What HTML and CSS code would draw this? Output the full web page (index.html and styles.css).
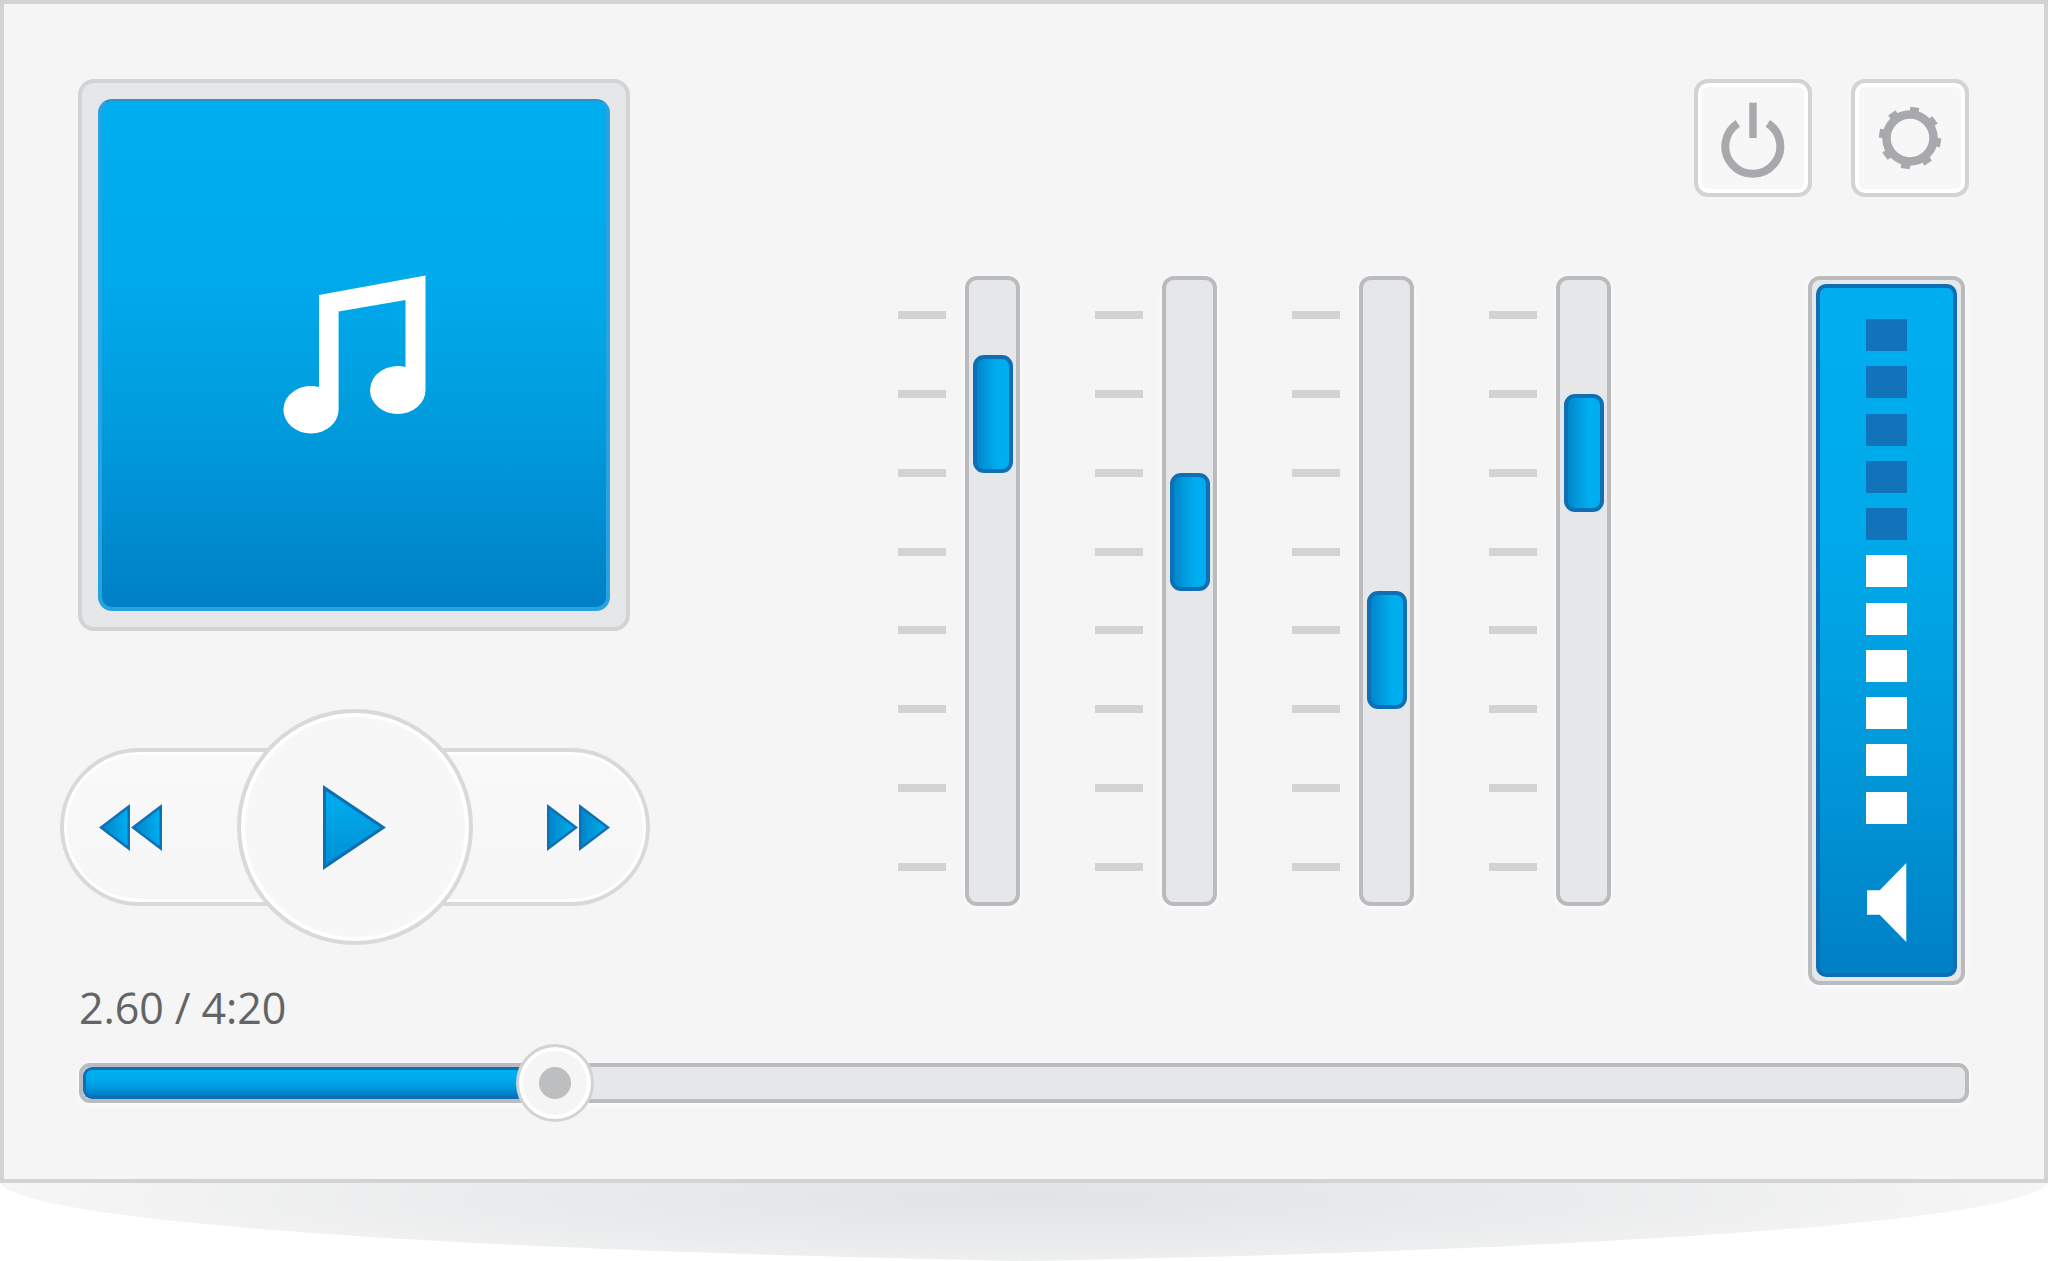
FILE: index.html
```html
<!DOCTYPE html>
<html lang="en">
<head>
  <meta charset="UTF-8">
  <title>Music Player</title>
  <link rel="stylesheet" href="styles.css">
</head>
<body>

  <div class="player">
    <svg class="defs" width="0" height="0">
      <defs>
        <linearGradient id="playFill" x1="0" y1="0" x2="0" y2="1">
          <stop offset="0" stop-color="#00aeef"/>
          <stop offset="1" stop-color="#0091d6"/>
        </linearGradient>
        <linearGradient id="skipFill" x1="0" y1="0" x2="1" y2="0">
          <stop offset="0" stop-color="#0085ca"/>
          <stop offset="1" stop-color="#00aeef"/>
        </linearGradient>
        <linearGradient id="rewindFill" x1="1" y1="0" x2="0" y2="0">
          <stop offset="0" stop-color="#00aeef"/>
          <stop offset="1" stop-color="#0085ca"/>
        </linearGradient>
      </defs>
    </svg>

    <div class="main">
      <!-- Album art and transport -->
      <div class="left">
        <div class="album-frame">
          <div class="album">
            <svg class="note" viewBox="283 275 143 159">
              <path fill="#fff" d="M319 295 L425.5 275.5 V390 A27.75 24 0 0 1 370 390 A27.75 24 0 0 1 405.5 367 V300 L338.6 311.4 V409.75 A27.6 23.75 0 0 1 283.4 409.75 A27.6 23.75 0 0 1 319 387 Z"/>
            </svg>
          </div>
        </div>

        <div class="transport">
          <div class="pill">
            <svg class="skip" viewBox="0 0 63 47">
              <polygon fill="#0f6fb5" points="31,0 0,23.5 31,47"/>
              <polygon fill="url(#rewindFill)" points="28.5,5 4,23.5 28.5,42"/>
              <polygon fill="#0f6fb5" points="63,0 32,23.5 63,47"/>
              <polygon fill="url(#rewindFill)" points="60.5,5 36,23.5 60.5,42"/>
            </svg>
            <svg class="skip" viewBox="0 0 63 47">
              <polygon fill="#0f6fb5" points="0,0 31,23.5 0,47"/>
              <polygon fill="url(#skipFill)" points="2.5,5 27,23.5 2.5,42"/>
              <polygon fill="#0f6fb5" points="32,0 63,23.5 32,47"/>
              <polygon fill="url(#skipFill)" points="34.5,5 59,23.5 34.5,42"/>
            </svg>
          </div>
          <div class="play">
            <svg class="play-icon" viewBox="0 0 63 85">
              <polygon fill="#0f6fb5" points="0,0 63,42.5 0,85"/>
              <polygon fill="url(#playFill)" points="3,6 57.5,42.5 3,79"/>
            </svg>
          </div>
        </div>

        <div class="time">2.60 / 4:20</div>
      </div>

      <div class="right">
        <!-- Power and settings -->
        <div class="top-buttons">
          <div class="square-btn">
            <svg class="btn-icon" viewBox="0 0 110 110">
              <rect x="51.3" y="19.7" width="7.4" height="35.3" fill="#a7a9ac"/>
              <path d="M39.8 40.3 A27.5 27.5 0 1 0 69.8 40.3" fill="none" stroke="#a7a9ac" stroke-width="8"/>
            </svg>
          </div>
          <div class="square-btn">
            <svg class="btn-icon" viewBox="0 0 110 110">
              <circle cx="55" cy="55" r="23.5" fill="none" stroke="#a7a9ac" stroke-width="8.5"/>
              <g fill="#a7a9ac">
                <rect x="50.5" y="24" width="9" height="8" transform="rotate(9 55 55)"/>
                <rect x="50.5" y="24" width="9" height="8" transform="rotate(54 55 55)"/>
                <rect x="50.5" y="24" width="9" height="8" transform="rotate(99 55 55)"/>
                <rect x="50.5" y="24" width="9" height="8" transform="rotate(144 55 55)"/>
                <rect x="50.5" y="24" width="9" height="8" transform="rotate(189 55 55)"/>
                <rect x="50.5" y="24" width="9" height="8" transform="rotate(234 55 55)"/>
                <rect x="50.5" y="24" width="9" height="8" transform="rotate(279 55 55)"/>
                <rect x="50.5" y="24" width="9" height="8" transform="rotate(324 55 55)"/>
              </g>
            </svg>
          </div>
        </div>

        <div class="mixer">
          <!-- Equalizer sliders -->
          <div class="slider">
            <div class="ticks">
              <span></span><span></span><span></span><span></span><span></span><span></span><span></span><span></span>
            </div>
            <div class="track"><div class="thumb eq-1"></div></div>
          </div>
          <div class="slider">
            <div class="ticks">
              <span></span><span></span><span></span><span></span><span></span><span></span><span></span><span></span>
            </div>
            <div class="track"><div class="thumb eq-2"></div></div>
          </div>
          <div class="slider">
            <div class="ticks">
              <span></span><span></span><span></span><span></span><span></span><span></span><span></span><span></span>
            </div>
            <div class="track"><div class="thumb eq-3"></div></div>
          </div>
          <div class="slider">
            <div class="ticks">
              <span></span><span></span><span></span><span></span><span></span><span></span><span></span><span></span>
            </div>
            <div class="track"><div class="thumb eq-4"></div></div>
          </div>

          <!-- Volume -->
          <div class="volume">
            <div class="volume-inner">
              <div class="levels">
                <span class="off"></span><span class="off"></span><span class="off"></span><span class="off"></span><span class="off"></span>
                <span></span><span></span><span></span><span></span><span></span><span></span>
              </div>
              <svg class="speaker" viewBox="0 0 40 79">
                <polygon fill="#fff" points="0,27.3 12.7,27.3 39.3,0 39.3,79 12.7,51.7 0,51.7"/>
              </svg>
            </div>
          </div>
        </div>
      </div>
    </div>

    <!-- Seek bar -->
    <div class="seek">
      <div class="seek-fill"></div>
      <div class="knob"><div class="knob-dot"></div></div>
    </div>
  </div>

  <div class="shadow"></div>

</body>
</html>
```

FILE: styles.css
```css
html, body {
  margin: 0;
  background-color: #fff;
}

body {
  width: 2048px;
  height: 1261px;
  overflow: hidden;
}

.player {
  box-sizing: border-box;
  width: 2048px;
  height: 1183px;
  padding: 75px 75px 0;
  background-color: #f5f5f5;
  border: 4px solid #d1d3d4;
}

.defs {
  position: absolute;
}

.main {
  display: flex;
}

/* left column */

.left {
  width: 552px;
  flex-shrink: 0;
  margin-left: -1px;
}

.album-frame {
  box-sizing: border-box;
  width: 552px;
  height: 552px;
  padding: 16px;
  background-color: #e6e7e8;
  border: 4px solid #d1d3d4;
  border-radius: 16px;
}

.album {
  box-sizing: border-box;
  display: flex;
  align-items: center;
  justify-content: center;
  height: 512px;
  border: 4px solid #29a3e0;
  border-top: 2px solid #2a93cc;
  border-radius: 14px;
  background: linear-gradient(#00aeef 0%, #00aaeb 35%, #009bdc 65%, #0080c6 100%);
}

.note {
  width: 143px;
  height: 159px;
}

.transport {
  position: relative;
  display: flex;
  align-items: center;
  width: 590px;
  height: 236px;
  margin: 78px 0 0 -18px;
}

.pill {
  box-sizing: border-box;
  display: flex;
  align-items: center;
  justify-content: space-between;
  width: 590px;
  height: 158px;
  padding: 0 36px 0 35px;
  background: linear-gradient(#f9f9f9, #f6f6f6);
  border: 4px solid #d8d9da;
  border-radius: 79px;
  box-shadow: inset 0 0 0 3px #fff;
}

.skip {
  width: 63px;
  height: 47px;
}

.play {
  position: absolute;
  top: 0;
  left: 177px;
  box-sizing: border-box;
  display: flex;
  align-items: center;
  justify-content: center;
  width: 236px;
  height: 236px;
  background-color: #f7f7f7;
  border: 4px solid #d8d9da;
  border-radius: 50%;
  box-shadow: inset 0 0 0 4px #fff;
}

.play-icon {
  width: 63px;
  height: 85px;
  margin-right: 2px;
}

.time {
  margin-top: 39px;
  font-family: "Open Sans", sans-serif;
  font-size: 43px;
  line-height: 48px;
  letter-spacing: -0.1px;
  color: #636466;
  padding-left: 1px;
}

/* right column */

.right {
  flex: 1;
}

.top-buttons {
  display: flex;
  justify-content: flex-end;
  gap: 39px;
}

.square-btn {
  box-sizing: border-box;
  display: flex;
  align-items: center;
  justify-content: center;
  width: 118px;
  height: 118px;
  background-color: #f7f7f7;
  border: 4px solid #d1d3d4;
  border-radius: 14px;
  box-shadow: inset 0 0 0 4px #fff;
}

.btn-icon {
  width: 110px;
  height: 110px;
}

.mixer {
  display: flex;
  gap: 75px;
  margin-top: 79px;
  padding: 0 4px 0 268px;
}

.slider {
  display: flex;
  gap: 19px;
}

.ticks {
  display: flex;
  flex-direction: column;
  gap: 70.86px;
  margin-top: 35px;
}

.ticks span {
  display: block;
  width: 48px;
  height: 8px;
  background-color: #d1d3d4;
}

.track {
  box-sizing: border-box;
  display: flex;
  flex-direction: column;
  align-items: center;
  width: 55px;
  height: 630px;
  background-color: #e6e7e8;
  border: 4px solid #b9bbbe;
  border-radius: 12px;
  box-shadow: 0 2px 6px rgba(255, 255, 255, 0.9);
}

.thumb {
  box-sizing: border-box;
  width: 40px;
  height: 118px;
  background: linear-gradient(to right, #0087cc, #00aeef 65%);
  border: 4px solid #0f6fb5;
  border-radius: 11px;
}

.eq-1 { margin-top: 75px; }
.eq-2 { margin-top: 193px; }
.eq-3 { margin-top: 311px; }
.eq-4 { margin-top: 114px; }

.volume {
  box-sizing: border-box;
  width: 157px;
  height: 709px;
  margin-left: auto;
  padding: 4px;
  background-color: #e6e7e8;
  border: 4px solid #b9bbbe;
  border-radius: 12px;
  box-shadow: 0 2px 8px rgba(255, 255, 255, 0.9);
}

.volume-inner {
  box-sizing: border-box;
  display: flex;
  flex-direction: column;
  align-items: center;
  height: 693px;
  padding-top: 31px;
  background: linear-gradient(#00aeef 0%, #00aaeb 35%, #009bdc 65%, #0080c6 100%);
  border: 4px solid #0f6fb5;
  border-radius: 10px;
}

.levels {
  display: flex;
  flex-direction: column;
  gap: 15.27px;
}

.levels span {
  display: block;
  width: 41px;
  height: 32px;
  background-color: #fff;
}

.levels .off {
  background-color: #1273bb;
}

.speaker {
  width: 40px;
  height: 79px;
  margin-top: 39px;
}

/* seek bar */

.seek {
  position: relative;
  box-sizing: border-box;
  height: 40px;
  margin-top: 31px;
  background-color: #e6e7e8;
  border: 4px solid #b9bbbe;
  border-radius: 11px;
  box-shadow: 0 2px 6px rgba(255, 255, 255, 0.9);
}

.seek-fill {
  box-sizing: border-box;
  width: 472px;
  height: 32px;
  background: linear-gradient(#00aeef 25%, #009fe2 60%, #0079c1 100%);
  border: 3px solid #0f6fb5;
  border-right: none;
  border-radius: 9px 0 0 9px;
}

.knob {
  position: absolute;
  top: -23px;
  left: 433px;
  box-sizing: border-box;
  display: flex;
  align-items: center;
  justify-content: center;
  width: 78px;
  height: 78px;
  background-color: #f5f5f5;
  border: 3px solid #d1d3d4;
  border-radius: 50%;
  box-shadow: inset 0 0 0 4px #fff;
}

.knob-dot {
  width: 32px;
  height: 32px;
  background-color: #bcbec0;
  border-radius: 50%;
}

/* floor shadow */

.shadow {
  height: 78px;
  background: radial-gradient(ellipse 1024px 90px at 50% 20%, #e2e3e4 0%, #ebeced 55%, #f6f6f6 100%);
  clip-path: path("M0 0 H2048 C2018 42 1548 68 1024 78 C500 68 30 42 0 0 Z");
}
```
